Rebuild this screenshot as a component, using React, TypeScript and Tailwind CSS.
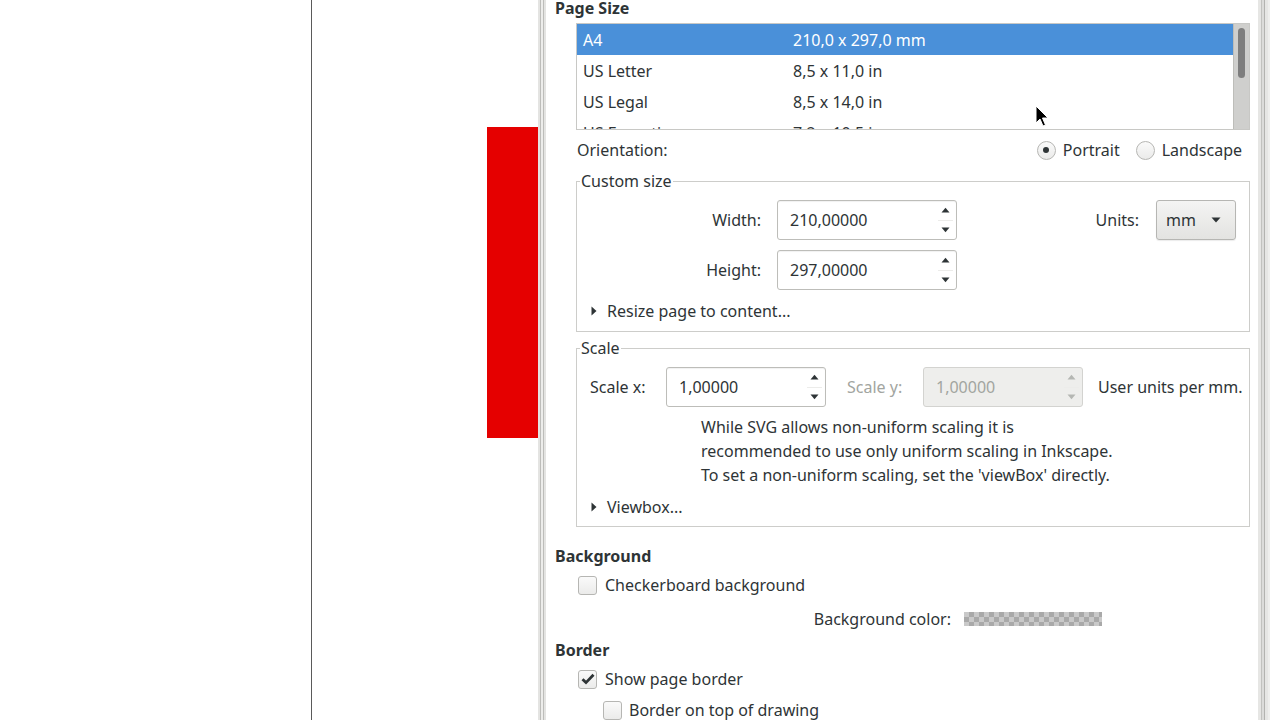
import React from "react";

const rows = [
  { name: "A4", size: "210,0 x 297,0 mm", selected: true },
  { name: "US Letter", size: "8,5 x 11,0 in" },
  { name: "US Legal", size: "8,5 x 14,0 in" },
  { name: "US Executive", size: "7,2 x 10,5 in" },
];

const Arrow = ({ up, color }: { up?: boolean; color: string }) => (
  <svg width="9" height="6" viewBox="0 0 9 6">
    {up ? <path d="M0.5 5.5 L4.5 0.8 L8.5 5.5 Z" fill={color} /> : <path d="M0.5 0.5 L4.5 5.2 L8.5 0.5 Z" fill={color} />}
  </svg>
);

const Spin = ({ value, disabled, className }: { value: string; disabled?: boolean; className: string }) => (
  <div
    className={
      disabled
        ? `flex h-[40px] items-stretch rounded-[3px] border border-[#d3d3d0] bg-[#eeeeec] text-[#a2a5a0] ${className}`
        : `flex h-[40px] items-stretch rounded-[3px] border border-[#bdbdb9] bg-white shadow-[inset_0_1px_1px_rgba(0,0,0,0.06)] ${className}`
    }
  >
    <div className="flex flex-1 items-center pl-[12px]">{value}</div>
    <div className="flex w-[21px] flex-col">
      <div className="flex flex-1 items-center justify-center">
        <Arrow up color={disabled ? "#b5b7b3" : "#2e3436"} />
      </div>
      <div className="mx-[3px] h-px bg-[#ececea]" />
      <div className="flex flex-1 items-center justify-center">
        <Arrow color={disabled ? "#b5b7b3" : "#2e3436"} />
      </div>
    </div>
  </div>
);

const Expander = ({ label }: { label: string }) => (
  <div className="flex items-center">
    <svg width="6" height="10" viewBox="0 0 6 10" className="ml-[14px] mr-[10px]">
      <path d="M0.5 0.5 L5.5 5 L0.5 9.5 Z" fill="#2e3436" />
    </svg>
    <span>{label}</span>
  </div>
);

const Check = ({ checked }: { checked?: boolean }) => (
  <div className="flex h-[19px] w-[19px] shrink-0 items-center justify-center rounded-[3px] border border-[#b6b6b3] bg-gradient-to-b from-[#fafafa] to-[#ebebea]">
    {checked && (
      <svg width="14" height="12" viewBox="0 0 14 12">
        <path d="M1.5 6.2 L5 9.6 L12.5 1.8" fill="none" stroke="#2e3436" strokeWidth="2.8" />
      </svg>
    )}
  </div>
);

const Radio = ({ checked }: { checked?: boolean }) => (
  <div className="flex h-[19px] w-[19px] items-center justify-center rounded-full border border-[#b6b6b3] bg-gradient-to-b from-[#fafafa] to-[#ebebea]">
    {checked && <div className="h-[6px] w-[6px] rounded-full bg-[#2e3436]" />}
  </div>
);

const Divider = () => (
  <div className="flex h-full w-[8px] shrink-0">
    <div className="w-[2px] bg-[#e4e4e2]" />
    <div className="w-px bg-[#bdbdba]" />
    <div className="w-[2px] bg-[#ededeb]" />
    <div className="w-px bg-[#bdbdba]" />
    <div className="w-[2px] bg-[#e4e4e2]" />
  </div>
);

export default function App() {
  return (
    <div className="relative flex h-[720px] w-[1280px] overflow-hidden bg-white font-['Noto_Sans',sans-serif] text-[16px] text-[#2e3436]">
      {/* canvas */}
      <div className="relative h-full w-[538px] shrink-0 bg-white">
        <div className="absolute left-[311px] top-0 h-full w-px bg-[#5a5a5a]" />
        <div className="absolute left-[487px] top-[127px] h-[311px] w-[51px] bg-[#e50000]" />
      </div>
      <Divider />

      {/* document properties panel */}
      <div className="h-full w-[712px] shrink-0 overflow-hidden bg-white pl-[9px]">
        <div className="h-[23px] font-bold leading-[16px]">Page Size</div>

        <div className="ml-[21px] w-[674px]">
          <div className="flex h-[107px] overflow-hidden border border-[#c8c8c5]">
            <div className="flex-1 overflow-hidden">
              {rows.map((r) => (
                <div
                  key={r.name}
                  className={
                    r.selected
                      ? "flex h-[31px] shrink-0 items-center bg-[#4a90d9] text-white"
                      : "flex h-[31px] shrink-0 items-center"
                  }
                >
                  <span className="w-[216px] pl-[6px]">{r.name}</span>
                  <span>{r.size}</span>
                </div>
              ))}
            </div>
            <div className="flex w-[16px] justify-center border-l border-[#bdbdb9] bg-[#cfcfcd] pt-[4px]">
              <div className="h-[50px] w-[7px] rounded-full bg-[#7e7e7e]" />
            </div>
          </div>

          <div className="flex h-[40px] items-center pr-[8px]">
            <span className="pl-px">Orientation:</span>
            <div className="ml-auto flex items-center">
              <Radio checked />
              <span className="ml-[7px]">Portrait</span>
              <div className="ml-[16px]">
                <Radio />
              </div>
              <span className="ml-[7px]">Landscape</span>
            </div>
          </div>

          <fieldset className="border border-[#cdcdca] pb-0">
            <legend className="ml-[3px] px-px leading-[22px]">Custom size</legend>
            <div className="mt-[8px] flex h-[40px] items-center">
              <span className="w-[184px] text-right">Width:</span>
              <Spin value="210,00000" className="ml-[16px] w-[180px]" />
              <span className="ml-auto">Units:</span>
              <div className="ml-[17px] mr-[13px] flex h-[40px] w-[80px] items-center rounded-[3px] border border-[#b6b6b3] bg-gradient-to-b from-[#f4f4f3] to-[#e3e3e1] pl-[9px] shadow-[0_1px_1px_rgba(0,0,0,0.08)]">
                <span>mm</span>
                <svg width="10" height="6" viewBox="0 0 10 6" className="ml-[15px]">
                  <path d="M0.5 0.5 L5 5.5 L9.5 0.5 Z" fill="#2e3436" />
                </svg>
              </div>
            </div>
            <div className="mt-[10px] flex h-[40px] items-center">
              <span className="w-[184px] text-right">Height:</span>
              <Spin value="297,00000" className="ml-[16px] w-[180px]" />
            </div>
            <div className="flex h-[41px] items-center">
              <Expander label="Resize page to content..." />
            </div>
          </fieldset>

          <fieldset className="mt-[5px] border border-[#cdcdca]">
            <legend className="ml-[3px] px-px leading-[22px]">Scale</legend>
            <div className="mt-[8px] flex h-[40px] items-center">
              <span className="ml-[13px] w-[76px]">Scale x:</span>
              <Spin value="1,00000" className="w-[160px]" />
              <span className="ml-[21px] w-[76px] text-[#a2a5a0]">Scale y:</span>
              <Spin value="1,00000" disabled className="w-[160px]" />
              <span className="ml-[15px]">User units per mm.</span>
            </div>
            <div className="mt-[8px] pl-[124px] leading-[24px]">
              <div>While SVG allows non-uniform scaling it is</div>
              <div>recommended to use only uniform scaling in Inkscape.</div>
              <div>To set a non-uniform scaling, set the 'viewBox' directly.</div>
            </div>
            <div className="flex h-[39px] items-center">
              <Expander label="Viewbox..." />
            </div>
          </fieldset>
        </div>

        <div className="mt-[18px] font-bold leading-[22px]">Background</div>
        <div className="ml-[23px] flex h-[36px] items-center">
          <Check />
          <span className="ml-[8px]">Checkerboard background</span>
        </div>
        <div className="ml-[21px] flex h-[32px] items-center">
          <span className="w-[375px] text-right">Background color:</span>
          <div className="ml-[13px] h-[14px] w-[138px] bg-[repeating-conic-gradient(#a9a9a9_0_25%,#c9c9c9_0_50%)] bg-size-[10px_10px]" />
        </div>
        <div className="mt-[4px] font-bold leading-[22px]">Border</div>
        <div className="ml-[23px] flex h-[36px] items-center">
          <Check checked />
          <span className="ml-[8px]">Show page border</span>
        </div>
        <div className="ml-[48px] flex h-[26px] items-center">
          <Check />
          <span className="ml-[7px]">Border on top of drawing</span>
        </div>
      </div>

      <div className="flex h-full w-[12px] shrink-0">
        <div className="w-[3px] bg-[#e6e6e4]" />
        <div className="w-px bg-[#c2c2bf]" />
        <div className="w-[2px] bg-[#dcdcda]" />
        <div className="w-px bg-[#b3b3b0]" />
        <div className="w-[3px] bg-[#e6e6e4]" />
        <div className="w-[2px] bg-[#efefed]" />
      </div>
      <div className="h-full flex-1 bg-white" />

      {/* mouse pointer */}
      <svg className="absolute left-[1035px] top-[105px]" width="14" height="23" viewBox="0 0 14 23">
        <path d="M1 1 L1 18 L5 14 L8 21 L10.5 20 L7.5 13 L13 13 Z" fill="#000" stroke="#fff" strokeWidth="1" strokeLinejoin="round" />
      </svg>
    </div>
  );
}
